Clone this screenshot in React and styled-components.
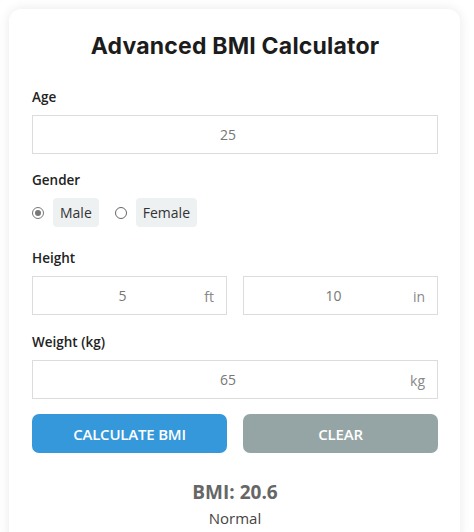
import React from "react";
import styled, { createGlobalStyle } from "styled-components";

const Global = createGlobalStyle`
  html, body { margin: 0; padding: 0; background: #ffffff; }
  body { font-family: "Open Sans", "Noto Sans", sans-serif; }
  * { box-sizing: border-box; }
`;

const Page = styled.div`
  padding: 9px 14px 0 9px;
`;

const Card = styled.div`
  background: #fff;
  border-radius: 12px;
  box-shadow: 0 0 12px rgba(0, 0, 0, 0.09);
  padding: 22px 22px 20px 23px;
  width: 451px;
`;

const Title = styled.h1`
  margin: 0 0 25px;
  text-align: center;
  font-family: "Inter", "Open Sans", sans-serif;
  font-weight: 700;
  font-size: 23px;
  line-height: 31px;
  color: #1c1c1c;
  letter-spacing: 0.2px;
`;

const Group = styled.div`
  margin-bottom: ${(p) => p.$mb ?? 16}px;
`;

const Label = styled.div`
  font-size: 13.5px;
  font-weight: 600;
  color: #222;
  line-height: 20px;
  margin-bottom: 8px;
`;

const Field = styled.div`
  position: relative;
  height: 39px;
  border: 1px solid #dcdcdc;
  background: #fff;
  display: flex;
  align-items: center;
  justify-content: center;
  padding-right: 14px;
  flex: 1;
`;

const Value = styled.span`
  font-size: 14px;
  color: #777;
`;

const Unit = styled.span`
  position: absolute;
  right: 12px;
  top: 50%;
  transform: translateY(-50%);
  font-size: 14px;
  color: #888;
`;

const Row = styled.div`
  display: flex;
  gap: 16px;
`;

const RadioRow = styled.div`
  display: flex;
  align-items: center;
  height: 29px;
`;

const RadioOpt = styled.div`
  display: flex;
  align-items: center;
  margin-right: 16px;
`;

const Radio = styled.span`
  width: 12px;
  height: 12px;
  border-radius: 50%;
  border: 1px solid ${(p) => (p.$checked ? "#777" : "#666")};
  display: inline-flex;
  align-items: center;
  justify-content: center;
  margin: 0 9px 0 0;
  &::after {
    content: "";
    width: 6px;
    height: 6px;
    border-radius: 50%;
    background: ${(p) => (p.$checked ? "#777" : "transparent")};
  }
`;

const Chip = styled.span`
  background: #eef1f2;
  border-radius: 4px;
  padding: 0 7px;
  height: 29px;
  line-height: 29px;
  font-size: 14px;
  color: #333;
`;

const Button = styled.button`
  flex: 1;
  height: 39px;
  border: none;
  border-radius: 7px;
  background: ${(p) => p.$bg};
  color: #fff;
  font-family: "Open Sans", "Noto Sans", sans-serif;
  font-weight: 600;
  font-size: 15px;
  letter-spacing: -0.2px;
  text-transform: uppercase;
  cursor: pointer;
`;

const Result = styled.div`
  text-align: center;
  margin-top: 26px;
`;

const BMI = styled.div`
  font-size: 19px;
  font-weight: 700;
  color: #666;
  line-height: 26px;
`;

const Category = styled.div`
  font-size: 15px;
  color: #444;
  line-height: 22px;
  margin-top: 2px;
`;

export default function App() {
  return (
    <>
      <Global />
      <Page>
        <Card>
          <Title>Advanced BMI Calculator</Title>
          <Group>
            <Label>Age</Label>
            <Field>
              <Value>25</Value>
            </Field>
          </Group>
          <Group $mb={21}>
            <Label>Gender</Label>
            <RadioRow>
              <RadioOpt>
                <Radio $checked />
                <Chip>Male</Chip>
              </RadioOpt>
              <RadioOpt>
                <Radio />
                <Chip>Female</Chip>
              </RadioOpt>
            </RadioRow>
          </Group>
          <Group $mb={17}>
            <Label>Height</Label>
            <Row>
              <Field>
                <Value>5</Value>
                <Unit>ft</Unit>
              </Field>
              <Field>
                <Value>10</Value>
                <Unit>in</Unit>
              </Field>
            </Row>
          </Group>
          <Group $mb={15}>
            <Label>Weight (kg)</Label>
            <Field>
              <Value>65</Value>
              <Unit>kg</Unit>
            </Field>
          </Group>
          <Row>
            <Button $bg="#3498db">Calculate BMI</Button>
            <Button $bg="#95a5a6">Clear</Button>
          </Row>
          <Result>
            <BMI>BMI: 20.6</BMI>
            <Category>Normal</Category>
          </Result>
        </Card>
      </Page>
    </>
  );
}
